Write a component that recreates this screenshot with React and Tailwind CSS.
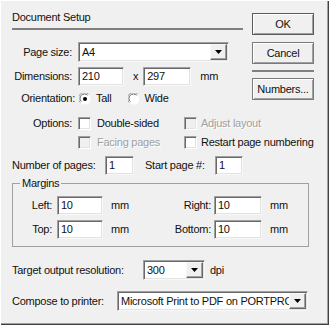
import React from "react";

const sunken =
  "border border-t-[#a0a0a0] border-l-[#a0a0a0] border-r-[#f8f8f8] border-b-[#f8f8f8] shadow-[inset_1px_1px_0_#696969,inset_-1px_-1px_0_#e3e3e3]";

function Input({ value, w }) {
  return (
    <div className={`h-[19px] bg-white flex items-center pl-[3px] ${sunken}`} style={{ width: w }}>
      <span className="leading-none">{value}</span>
    </div>
  );
}

function DropBtn() {
  return (
    <div className="w-[17px] h-full bg-[#f0f0f0] border border-[#f8f8f8] border-r-[#696969] border-b-[#696969] shadow-[inset_-1px_-1px_0_#a0a0a0] flex items-center justify-center">
      <svg width="7" height="4" viewBox="0 0 7 4">
        <path d="M0 0H7L3.5 4Z" fill="#000" />
      </svg>
    </div>
  );
}

function Select({ value, w, h = 20 }) {
  return (
    <div className={`bg-white flex items-stretch ${sunken} p-[1px]`} style={{ width: w, height: h }}>
      <div className="flex-1 flex items-center pl-[2px] overflow-hidden whitespace-nowrap">{value}</div>
      <DropBtn />
    </div>
  );
}

function Button({ children, def }) {
  return (
    <button
      className={`w-[62px] h-[22px] bg-[#f0f0f0] flex items-center justify-center border ${
        def ? "border-[#5a5a5a]" : "border-[#7a7a7a]"
      } shadow-[inset_1px_1px_0_#fff,inset_-1px_-1px_0_#a0a0a0]`}
    >
      {children}
    </button>
  );
}

function Check({ disabled }) {
  return (
    <div
      className={`w-[13px] h-[13px] shrink-0 ${disabled ? "bg-[#f0f0f0]" : "bg-white"} border border-t-[#a0a0a0] border-l-[#a0a0a0] border-r-[#fff] border-b-[#fff] shadow-[inset_1px_1px_0_#696969,inset_-1px_-1px_0_#e3e3e3]`}
    />
  );
}

function Radio({ on }) {
  return (
    <svg width="12" height="12" viewBox="0 0 12 12" className="shrink-0">
      <circle cx="6" cy="6" r="5.5" fill="#fff" />
      <path d="M1.2 9.5A5.5 5.5 0 0 1 9.5 1.2" stroke="#a0a0a0" fill="none" />
      <path d="M2.3 8.6A4.3 4.3 0 0 1 8.6 2.3" stroke="#696969" fill="none" />
      {on && <circle cx="6" cy="6" r="2" fill="#000" />}
    </svg>
  );
}

const dis = "text-[#a0a0a0] [text-shadow:1px_1px_0_#fff]";

export default function App() {
  return (
    <div
      className="w-[329px] h-[325px] bg-[#f0f0f0] text-[#111] text-[11px] leading-[13px] tracking-[-0.25px] shadow-[inset_1px_1px_0_#fff,inset_-1px_-1px_0_#404040,inset_-2px_-2px_0_#a0a0a0] overflow-hidden"
      style={{ fontFamily: '"Liberation Sans", Arial, sans-serif' }}
    >
      {/* Top section */}
      <div className="flex h-[105px]">
        <div className="w-[243px] pl-[12px]">
          <div className="pt-[11px] h-[24px]">Document Setup</div>
          <div className="mt-[4px] h-[2px] bg-[#808080]" />
          <div className="mt-[12px] flex items-center h-[20px]">
            <div className="w-[60px] text-right">Page size:</div>
            <div className="ml-[6px]">
              <Select value="A4" w={151} />
            </div>
          </div>
          <div className="mt-[5px] flex items-center h-[19px]">
            <div className="w-[60px] text-right">Dimensions:</div>
            <div className="ml-[6px]">
              <Input value="210" w={46} />
            </div>
            <div className="ml-[9px]">x</div>
            <div className="ml-[5px]">
              <Input value="297" w={48} />
            </div>
            <div className="ml-[9px]">mm</div>
          </div>
          <div className="mt-[6px] flex items-center h-[13px]">
            <div className="w-[63px] text-right">Orientation:</div>
            <div className="ml-[4px] flex items-center">
              <Radio on />
              <span className="ml-[5px]">Tall</span>
            </div>
            <div className="ml-[16px] flex items-center">
              <Radio />
              <span className="ml-[5px]">Wide</span>
            </div>
          </div>
        </div>
        <div className="ml-[9px] w-[62px] flex flex-col">
          <div className="mt-[13px]">
            <Button def>OK</Button>
          </div>
          <div className="mt-[7px]">
            <Button>Cancel</Button>
          </div>
          <div className="mt-[6px] h-[2px] bg-[#808080]" />
          <div className="mt-[6px]">
            <Button>Numbers...</Button>
          </div>
        </div>
      </div>

      {/* Options */}
      <div className="pl-[12px]">
        <div className="mt-[12px] flex items-center h-[13px]">
          <div className="w-[60px] text-right">Options:</div>
          <div className="ml-[6px] w-[106px] flex items-center">
            <Check />
            <span className="ml-[6px]">Double-sided</span>
          </div>
          <div className="flex items-center">
            <Check disabled />
            <span className={`ml-[4px] ${dis}`}>Adjust layout</span>
          </div>
        </div>
        <div className="mt-[6px] flex items-center h-[13px]">
          <div className="w-[60px]" />
          <div className="ml-[6px] w-[106px] flex items-center">
            <Check disabled />
            <span className={`ml-[6px] ${dis}`}>Facing pages</span>
          </div>
          <div className="flex items-center">
            <Check />
            <span className="ml-[4px]">Restart page numbering</span>
          </div>
        </div>

        <div className="mt-[7px] flex items-center h-[19px]">
          <div className="w-[93px]">Number of pages:</div>
          <Input value="1" w={29} />
          <div className="ml-[11px] w-[70px]">Start page #:</div>
          <Input value="1" w={28} />
        </div>

        {/* Margins */}
        <fieldset className="mt-[2px] w-[297px] border border-[#a0a0a0] pb-[7px]">
          <legend className="ml-[7px] px-[2px] leading-[13px]">Margins</legend>
          <div className="mt-[6px] flex items-center h-[19px]">
            <div className="w-[39px] text-right">Left:</div>
            <div className="ml-[5px]">
              <Input value="10" w={46} />
            </div>
            <div className="ml-[8px] w-[30px]">mm</div>
            <div className="w-[70px] text-right">Right:</div>
            <div className="ml-[3px]">
              <Input value="10" w={48} />
            </div>
            <div className="ml-[8px]">mm</div>
          </div>
          <div className="mt-[5px] flex items-center h-[19px]">
            <div className="w-[39px] text-right">Top:</div>
            <div className="ml-[5px]">
              <Input value="10" w={46} />
            </div>
            <div className="ml-[8px] w-[30px]">mm</div>
            <div className="w-[70px] text-right">Bottom:</div>
            <div className="ml-[3px]">
              <Input value="10" w={48} />
            </div>
            <div className="ml-[8px]">mm</div>
          </div>
        </fieldset>

        <div className="mt-[13px] flex items-center h-[20px]">
          <div className="w-[131px]">Target output resolution:</div>
          <Select value="300" w={62} />
          <div className="ml-[5px]">dpi</div>
        </div>
        <div className="mt-[11px] flex items-center h-[20px]">
          <div className="w-[105px]">Compose to printer:</div>
          <Select value="Microsoft Print to PDF on PORTPROMPT:" w={191} />
        </div>
      </div>
    </div>
  );
}
